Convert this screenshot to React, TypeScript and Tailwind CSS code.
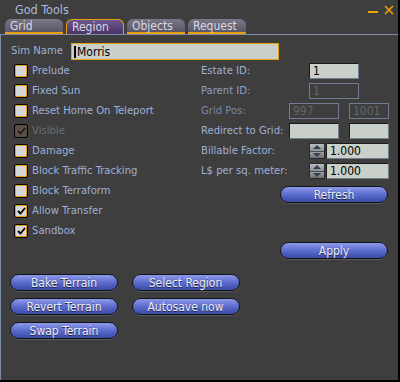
import React from "react";

const font = { fontFamily: '"DejaVu Sans Condensed", "DejaVu Sans", sans-serif' };

function Check({ label, checked, disabled }: { label: string; checked?: boolean; disabled?: boolean }) {
  return (
    <div className="flex h-[20px] items-center">
      <div
        className={
          "ml-[13px] flex h-[14px] w-[14px] items-center justify-center rounded-[2px] border border-black " +
          (disabled ? "bg-[#5a4a3a]" : "bg-[#e8a010]")
        }
      >
        <div
          className={
            "flex h-[10px] w-[10px] items-center justify-center " +
            (disabled ? "bg-[#5c5048]" : "bg-[#d4d6d8]")
          }
        >
          {checked && (
            <svg width="9" height="8" viewBox="0 0 9 8">
              <path d="M1 4 L3.5 6.5 L8 1" fill="none" stroke={disabled ? "#1c1c1c" : "#000"} strokeWidth="1.8" />
            </svg>
          )}
        </div>
      </div>
      <span
        className={
          "ml-[4px] whitespace-nowrap text-[11.2px] " + (disabled ? "text-[#6a6e76]" : "text-[#9fb0d6]")
        }
      >
        {label}
      </span>
    </div>
  );
}

function Field({ value, w, disabled }: { value?: string; w: string; disabled?: boolean }) {
  return (
    <div
      className={
        "flex h-[16px] items-center border px-[3px] text-[12px] " +
        w +
        (disabled
          ? " border-[#6f7c92] bg-[#3e3e3e] text-[#62666c]"
          : " border-t-[#1a1a1a] border-l-[#1a1a1a] border-r-[#6f7c92] border-b-[#6f7c92] bg-[#c8d0c9] text-black")
      }
    >
      {value}
    </div>
  );
}

function Spinner() {
  return (
    <div className="mr-[1px] flex h-[16px] w-[16px] flex-col border border-[#2a2a2a]">
      <div className="flex flex-1 items-center justify-center bg-gradient-to-b from-[#b8bcc4] to-[#8c9098]">
        <svg width="8" height="4" viewBox="0 0 8 4">
          <path d="M0 4 L4 0 L8 4Z" fill="#3a3e46" />
        </svg>
      </div>
      <div className="h-px bg-[#4a4e56]" />
      <div className="flex flex-1 items-center justify-center bg-gradient-to-b from-[#9ca0a8] to-[#6c7078]">
        <svg width="8" height="4" viewBox="0 0 8 4">
          <path d="M0 0 L4 4 L8 0Z" fill="#3a3e46" />
        </svg>
      </div>
    </div>
  );
}

function Btn({ label }: { label: string }) {
  return (
    <div className="flex h-[17px] w-[108px] items-center justify-center rounded-full border border-[#141414] bg-gradient-to-b from-[#8c98e8] via-[#5c6ccc] to-[#3c4aa6] text-[12px] text-[#eceef8] shadow-[0_1px_0_#5a5a5a] [text-shadow:0_1px_0_#20264a]">
      {label}
    </div>
  );
}

function Tab({ label, active }: { label: string; active?: boolean }) {
  return (
    <div
      className={
        "flex h-[15px] w-[58px] items-center rounded-t-[6px] pl-[5px] text-[12px] text-[#d8d8e0] " +
        (active
          ? "border border-b-0 border-[#e8a010] bg-gradient-to-b from-[#6a5890] to-[#4a3468]"
          : "border-b-2 border-[#e8a010] bg-gradient-to-b from-[#7a7888] to-[#5a5868]")
      }
    >
      {label}
    </div>
  );
}

export default function App() {
  return (
    <div style={font} className="flex h-[382px] w-[400px] flex-col border-r-2 border-b-2 border-black bg-[#3e3e3e]">
      {/* title bar */}
      <div className="flex h-[20px] items-center justify-between pl-[15px] pr-[4px]">
        <span className="text-[12.5px] text-[#a8b8dc]">God Tools</span>
        <div className="flex items-center gap-[6px]">
          <div className="mt-[4px] h-[2px] w-[10px] bg-[#f0a400]" />
          <svg width="10" height="10" viewBox="0 0 10 10">
            <path d="M1 1 L9 9 M9 1 L1 9" stroke="#f0a400" strokeWidth="1.6" />
          </svg>
        </div>
      </div>

      {/* tabs */}
      <div className="flex h-[15px] items-end gap-[3px] border-b border-[#7c8aa4] pl-[5px]">
        <Tab label="Grid" />
        <Tab label="Region" active />
        <Tab label="Objects" />
        <Tab label="Request" />
      </div>

      {/* body */}
      <div className="flex flex-1 flex-col border-l border-[#7c8aa4] pt-[8px]">
        <div className="flex h-[17px] items-center">
          <span className="ml-[10px] w-[60px] text-[11.2px] text-[#9fb0d6]">Sim Name</span>
          <div className="flex h-[17px] w-[208px] items-center border border-[#e8a010] bg-[#c8d0c9] px-[2px] text-[12px] text-black">
            <span className="mr-[1px] h-[12px] w-[2px] bg-black" />
            Morris
          </div>
        </div>

        <div className="mt-[1px] flex">
          <div className="flex w-[200px] flex-col">
            <Check label="Prelude" />
            <Check label="Fixed Sun" />
            <Check label="Reset Home On Teleport" />
            <Check label="Visible" checked disabled />
            <Check label="Damage" />
            <Check label="Block Traffic Tracking" />
            <Check label="Block Terraform" />
            <Check label="Allow Transfer" checked />
            <Check label="Sandbox" checked />
          </div>

          <div className="flex w-[188px] flex-col whitespace-nowrap text-[11.2px]">
            <div className="flex h-[20px] items-center">
              <span className="w-[108px] text-[#9fb0d6]">Estate ID:</span>
              <Field value="1" w="w-[50px]" />
            </div>
            <div className="flex h-[20px] items-center">
              <span className="w-[108px] text-[#8e9ec2]">Parent ID:</span>
              <Field value="1" w="w-[50px]" disabled />
            </div>
            <div className="flex h-[20px] items-center">
              <span className="w-[88px] text-[#7a88a6]">Grid Pos:</span>
              <Field value="997" w="w-[50px]" disabled />
              <div className="w-[10px]" />
              <Field value="1001" w="w-[40px]" disabled />
            </div>
            <div className="flex h-[20px] items-center">
              <span className="w-[88px] text-[#9fb0d6]">Redirect to Grid:</span>
              <Field w="w-[50px]" />
              <div className="w-[10px]" />
              <Field w="w-[40px]" />
            </div>
            <div className="flex h-[20px] items-center">
              <span className="w-[108px] text-[#9fb0d6]">Billable Factor:</span>
              <Spinner />
              <Field value="1.000" w="w-[63px]" />
            </div>
            <div className="flex h-[20px] items-center">
              <span className="w-[108px] text-[#9fb0d6]">L$ per sq. meter:</span>
              <Spinner />
              <Field value="1.000" w="w-[63px]" />
            </div>
            <div className="mt-[5px] pl-[79px]">
              <Btn label="Refresh" />
            </div>
          </div>
        </div>

        <div className="mt-[1px] pl-[279px]">
          <Btn label="Apply" />
        </div>

        <div className="mt-[15px] grid w-[240px] grid-cols-2 gap-x-[12px] gap-y-[7px] pl-[9px]">
          <Btn label="Bake Terrain" />
          <Btn label="Select Region" />
          <Btn label="Revert Terrain" />
          <Btn label="Autosave now" />
          <Btn label="Swap Terrain" />
        </div>
      </div>
    </div>
  );
}
